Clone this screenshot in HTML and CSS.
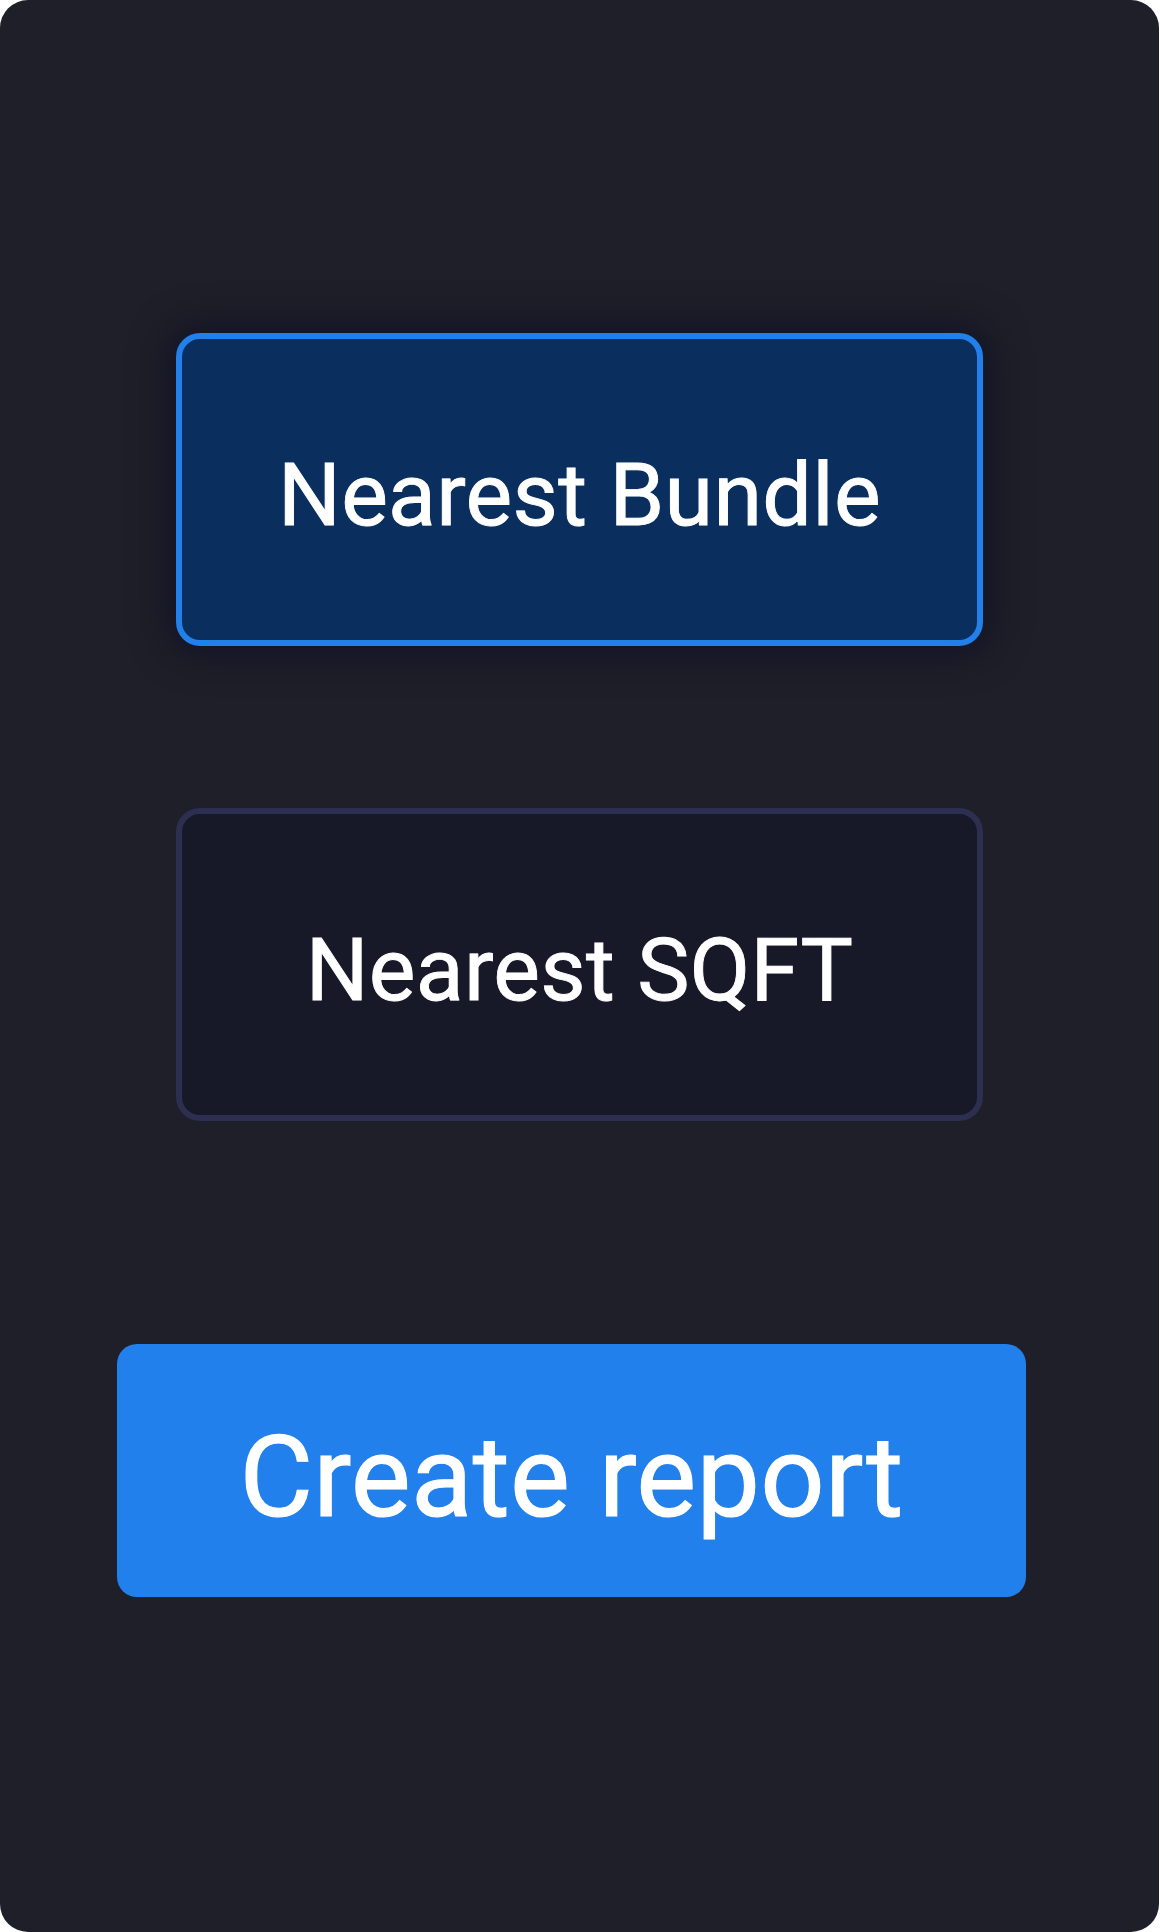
FILE: index.html
```html
<!DOCTYPE html>
<html lang="en">
<head>
<meta charset="utf-8">
<title>Report options</title>
<link rel="stylesheet" href="styles.css">
</head>
<body>
  <main class="panel">
    <div class="options">
      <button class="option option-selected" type="button">Nearest Bundle</button>
      <button class="option" type="button">Nearest SQFT</button>
    </div>
    <button class="create" type="button">Create report</button>
  </main>
</body>
</html>
```

FILE: styles.css
```css
html, body {
  margin: 0;
  padding: 0;
  background: #ffffff;
}

body {
  width: 1160px;
  height: 1932px;
  font-family: Roboto, "Liberation Sans", sans-serif;
}

.panel {
  box-sizing: border-box;
  width: 1159px;
  height: 1932px;
  background: #1f1f29;
  border-radius: 28px;
  padding-top: 333px;
  display: flex;
  flex-direction: column;
  align-items: flex-start;
}

.options {
  display: flex;
  flex-direction: column;
  gap: 162px;
  margin-left: 176px;
}

.option {
  box-sizing: border-box;
  width: 807px;
  height: 313px;
  border-radius: 24px;
  border: 6px solid #2c2f4f;
  background: #171929;
  color: #ffffff;
  font-family: Roboto, "Liberation Sans", sans-serif;
  font-size: 88px;
  font-weight: 400;
  letter-spacing: 0.3px;
  -webkit-text-stroke: 0.9px #ffffff;
  display: flex;
  align-items: center;
  justify-content: center;
  padding: 10px 0 0 0;
  margin: 0;
  cursor: pointer;
}

.option-selected {
  border-color: #2180ea;
  background: #0a2e5e;
  box-shadow: 0 0 36px 8px rgba(14, 16, 36, 0.75);
}

.create {
  box-sizing: border-box;
  margin: 223px 0 0 117px;
  width: 909px;
  height: 253px;
  border: none;
  border-radius: 20px;
  background: #2180ec;
  color: #ffffff;
  font-family: Roboto, "Liberation Sans", sans-serif;
  font-size: 113px;
  font-weight: 400;
  letter-spacing: 0.3px;
  -webkit-text-stroke: 1.1px #ffffff;
  display: flex;
  align-items: center;
  justify-content: center;
  padding: 14px 0 0 0;
  cursor: pointer;
}
```
